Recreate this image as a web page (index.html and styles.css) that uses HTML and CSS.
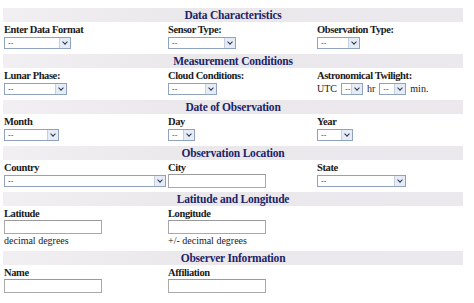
FILE: index.html
```html
<!DOCTYPE html>
<html>
<head>
<meta charset="utf-8">
<link rel="stylesheet" href="styles.css">
</head>
<body>
<div class="form">
  <div class="hdr first">Data Characteristics</div>
  <div class="row labels">
    <div>Enter Data Format</div><div>Sensor Type:</div><div>Observation Type:</div>
  </div>
  <div class="row ctrls">
    <div><span class="sel w67"><span class="v">--</span><span class="arr"></span></span></div>
    <div><span class="sel w68"><span class="v">--</span><span class="arr"></span></span></div>
    <div><span class="sel w43"><span class="v">--</span><span class="arr"></span></span></div>
  </div>

  <div class="hdr">Measurement Conditions</div>
  <div class="row labels">
    <div>Lunar Phase:</div><div>Cloud Conditions:</div><div>Astronomical Twilight:</div>
  </div>
  <div class="row ctrls">
    <div><span class="sel w63"><span class="v">--</span><span class="arr"></span></span></div>
    <div><span class="sel w49"><span class="v">--</span><span class="arr"></span></span></div>
    <div class="inline"><span class="plain">UTC</span><span class="sel w23"><span class="v">--</span><span class="arr"></span></span><span class="plain">hr</span><span class="sel w27"><span class="v">--</span><span class="arr"></span></span><span class="plain">min.</span></div>
  </div>

  <div class="hdr">Date of Observation</div>
  <div class="row labels">
    <div>Month</div><div>Day</div><div>Year</div>
  </div>
  <div class="row ctrls">
    <div><span class="sel w55"><span class="v">--</span><span class="arr"></span></span></div>
    <div><span class="sel w27"><span class="v">--</span><span class="arr"></span></span></div>
    <div><span class="sel w36"><span class="v">--</span><span class="arr"></span></span></div>
  </div>

  <div class="hdr">Observation Location</div>
  <div class="row labels">
    <div>Country</div><div>City</div><div>State</div>
  </div>
  <div class="row ctrls">
    <div><span class="sel w162"><span class="v">--</span><span class="arr"></span></span></div>
    <div><span class="inp w98"></span></div>
    <div><span class="sel w89"><span class="v">--</span><span class="arr"></span></span></div>
  </div>

  <div class="hdr">Latitude and Longitude</div>
  <div class="row labels">
    <div>Latitude</div><div>Longitude</div><div></div>
  </div>
  <div class="row ctrls">
    <div><span class="inp w98"></span></div>
    <div><span class="inp w98"></span></div>
    <div></div>
  </div>
  <div class="row notes">
    <div>decimal degrees</div><div>+/- decimal degrees</div><div></div>
  </div>

  <div class="hdr">Observer Information</div>
  <div class="row labels">
    <div>Name</div><div>Affiliation</div><div></div>
  </div>
  <div class="row ctrls">
    <div><span class="inp w98"></span></div>
    <div><span class="inp w98"></span></div>
    <div></div>
  </div>
</div>
</body>
</html>
```

FILE: styles.css
```css
html, body {
  margin: 0;
  padding: 0;
  background: #ffffff;
}
body {
  font-family: "Liberation Serif", "DejaVu Serif", "Times New Roman", serif;
  color: #1a1a1a;
}
.form {
  width: 474px;
  padding-top: 8px;
}
.hdr {
  margin: 4px 0 0 3px;
  width: 460px;
  height: 14px;
  line-height: 15px;
  background: linear-gradient(90deg, #f1eff1 0%, #ebe8ec 40%, #ece9ee 100%);
  color: #1c2468;
  font-family: "Liberation Serif", serif;
  font-weight: bold;
  font-size: 11.5px;
  letter-spacing: -0.2px;
  text-align: center;
}
.hdr.first {
  margin-top: 0;
}
.row {
  display: grid;
  grid-template-columns: 164px 149px 1fr;
  padding-left: 4px;
}
.labels {
  height: 14px;
  align-items: end;
  font-family: "Liberation Serif", serif;
  font-weight: bold;
  font-size: 10.5px;
  letter-spacing: -0.4px;
  line-height: 12px;
}
.ctrls {
  height: 14px;
  align-items: center;
  font-size: 10px;
}
.notes {
  height: 12px;
  font-family: "Liberation Serif", serif;
  font-size: 10px;
  line-height: 12px;
  padding-top: 1px;
  margin-bottom: 1px;
}
.inline {
  display: flex;
  align-items: center;
  gap: 4px;
}
.plain {
  font-family: "Liberation Serif", serif;
  font-size: 10px;
  line-height: 12px;
}
.sel {
  display: flex;
  box-sizing: border-box;
  height: 12px;
  border: 1px solid #8fa3c0;
  background: #fff;
  align-items: stretch;
}
.sel .v {
  flex: 1;
  font-family: "Liberation Sans", Arial, sans-serif;
  font-size: 8px;
  line-height: 10px;
  padding-left: 3px;
  color: #333;
}
.sel .arr {
  position: relative;
  width: 10px;
  margin: 0;
  border-left: 1px solid #c4cfe0;
  background: #e6ecf6;
}
.sel .arr::after {
  content: "";
  position: absolute;
  left: 3px;
  top: 2px;
  width: 3px;
  height: 3px;
  border-right: 1.5px solid #2a3550;
  border-bottom: 1.5px solid #2a3550;
  transform: rotate(45deg);
}
.inp {
  display: block;
  box-sizing: border-box;
  height: 14px;
  border: 1px solid #a9a9a9;
  border-top-color: #9a9a9a;
  background: #fff;
}
.w23 { width: 22px; }
.w27 { width: 27px; }
.w36 { width: 36px; }
.w43 { width: 43px; }
.w49 { width: 49px; }
.w55 { width: 55px; }
.w63 { width: 63px; }
.w67 { width: 67px; }
.w68 { width: 68px; }
.w89 { width: 89px; }
.w98 { width: 98px; }
.w162 { width: 162px; }
```
